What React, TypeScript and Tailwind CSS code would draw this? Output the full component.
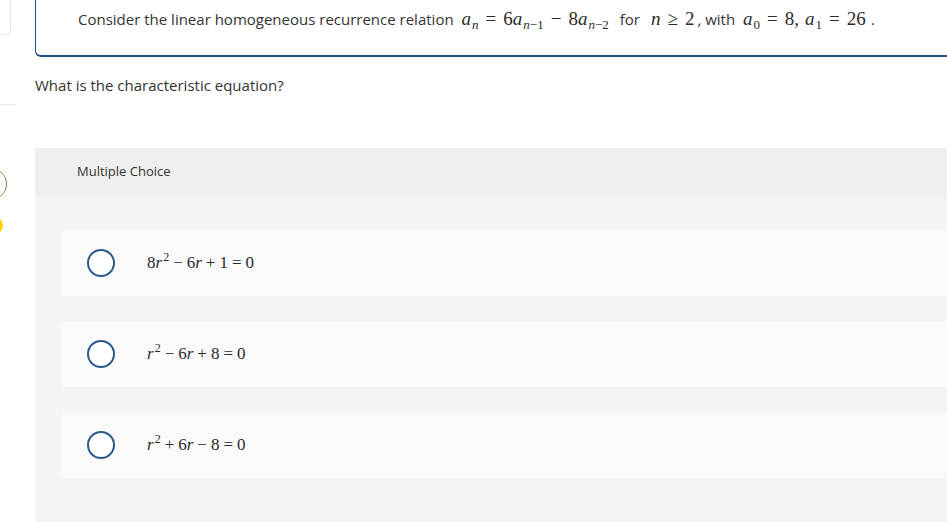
import React from 'react';

const sans = { fontFamily: '"Open Sans", "Liberation Sans", sans-serif' };
const serif = { fontFamily: '"Liberation Serif", "DejaVu Serif", serif' };

function V({ children }: { children: React.ReactNode }) {
  return <i className="italic">{children}</i>;
}

function Sub({ children }: { children: React.ReactNode }) {
  return <span className="relative top-[4px] ml-[1px] text-[13px] not-italic">{children}</span>;
}

function Sup({ children }: { children: React.ReactNode }) {
  return <span className="relative -top-[7px] ml-[1px] text-[12px] not-italic">{children}</span>;
}

function Op({ children, wide }: { children: React.ReactNode; wide?: boolean }) {
  return <span className={wide ? 'mx-[7px]' : 'mx-[4px]'}>{children}</span>;
}

function Tex({ children, size = 'text-[17px]' }: { children: React.ReactNode; size?: string }) {
  return (
    <span className={size + ' text-[#2b2b2b]'} style={serif}>
      {children}
    </span>
  );
}

const options = [
  <>
    8<V>r</V><Sup>2</Sup><Op>−</Op>6<V>r</V><Op>+</Op>1<Op>=</Op>0
  </>,
  <>
    <V>r</V><Sup>2</Sup><Op>−</Op>6<V>r</V><Op>+</Op>8<Op>=</Op>0
  </>,
  <>
    <V>r</V><Sup>2</Sup><Op>+</Op>6<V>r</V><Op>−</Op>8<Op>=</Op>0
  </>,
];

export default function App() {
  return (
    <div className="flex h-[522px] w-[947px] overflow-hidden bg-white text-[#333]" style={sans}>
      {/* left rail, mostly cut off */}
      <div className="flex w-[35px] shrink-0 flex-col">
        <div className="h-[35px] w-[11px] rounded-br-md border-r border-b border-[#e6e6e6]" />
        <div className="mt-[69px] h-px w-[15px] bg-[#e8e8e8]" />
        <div className="-ml-[21px] mt-[64px] h-[30px] w-[28px] rounded-full border border-[#5d9a4a]" />
        <div className="-ml-[15px] mt-[18px] h-[17px] w-[18px] rounded-full bg-[#ffd200]" />
      </div>

      <div className="flex min-w-0 flex-1 flex-col">
        {/* prompt box */}
        <div className="-mr-[20px] h-[57px] shrink-0 rounded-bl-md border-l border-b-2 border-[#1d4f7f] pl-[42px] pt-[5px]">
          <p className="flex items-baseline whitespace-nowrap text-[15px] text-[#333]">
            <span>Consider the linear homogeneous recurrence relation</span>
            <span className="ml-[8px]">
              <Tex size="text-[19px]">
                <V>a</V><Sub><V>n</V></Sub><Op wide>=</Op>6<V>a</V><Sub><V>n</V>−1</Sub><Op wide>−</Op>8<V>a</V><Sub><V>n</V>−2</Sub>
              </Tex>
            </span>
            <span className="ml-[11px]">for</span>
            <span className="ml-[11px]">
              <Tex size="text-[19px]">
                <V>n</V><Op wide>≥</Op>2
              </Tex>
            </span>
            <span className="ml-[3px]">, with</span>
            <span className="ml-[8px]">
              <Tex size="text-[19px]">
                <V>a</V><Sub>0</Sub><Op wide>=</Op>8,<span className="ml-[6px]" /><V>a</V><Sub>1</Sub><Op wide>=</Op>26
              </Tex>
            </span>
            <span className="ml-[5px]">.</span>
          </p>
        </div>

        <p className="mt-[17px] text-[15px] text-[#333]">What is the characteristic equation?</p>

        {/* multiple choice panel */}
        <div className="mt-[51px] flex flex-1 flex-col bg-[#f4f4f4]">
          <div className="flex h-[49px] shrink-0 items-center bg-[#efefef] pl-[42px] text-[13px] text-[#333]">
            Multiple Choice
          </div>
          <div className="flex flex-col gap-[25px] pl-[26px] pt-[33px]">
            {options.map((opt, i) => (
              <div key={i} className="flex h-[66px] items-center rounded-l-sm bg-[#fafafa] pl-[26px]">
                <div className="h-[28px] w-[28px] shrink-0 rounded-full border-2 border-[#2b5a8a] bg-white" />
                <div className="ml-[32px]">
                  <Tex>{opt}</Tex>
                </div>
              </div>
            ))}
          </div>
        </div>
      </div>
    </div>
  );
}
